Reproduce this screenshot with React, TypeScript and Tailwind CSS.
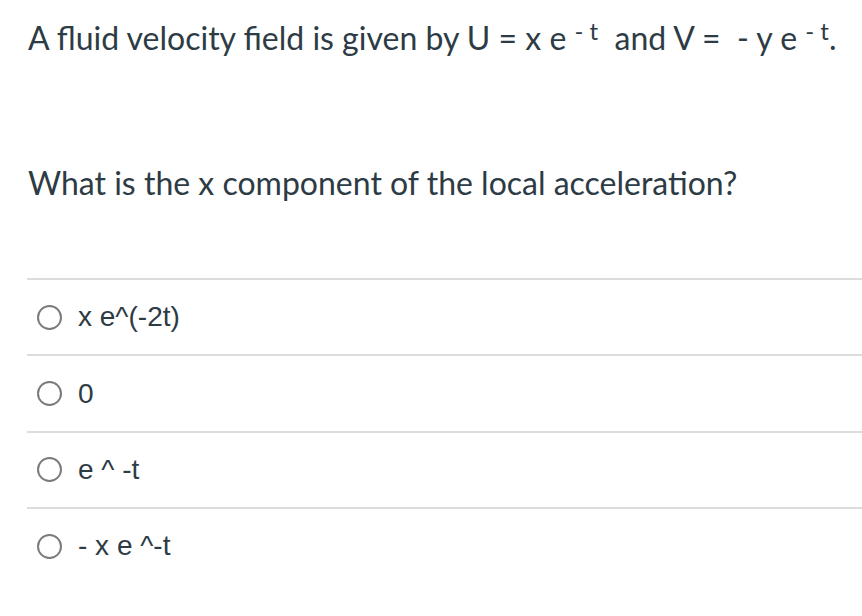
import React from 'react';

const answers = ['x e^(-2t)', '0', 'e ^ -t', '- x e ^-t'];

const Radio: React.FC = () => (
  <span className="inline-block w-[25px] h-[25px] rounded-full border-2 border-[#7b7b7b] bg-white shrink-0" />
);

const App: React.FC = () => {
  return (
    <div className="w-[862px] h-[616px] bg-white text-[#2d3b45] overflow-hidden" style={{ fontFamily: 'Lato, "Open Sans", sans-serif' }}>
      <div className="pl-[28px] pt-[18px]">
        <p className="text-[32px] leading-[40px] whitespace-nowrap">
          A fluid velocity field is given by U = x e <sup className="text-[24px] top-[-10px]">- t</sup>&nbsp; and V = &nbsp;- y e <sup className="text-[24px] top-[-10px]">- t</sup>.
        </p>
        <p className="text-[32px] leading-[40px] mt-[105px]">What is the x component of the local acceleration?</p>
      </div>
      <div className="pl-[27px] mt-[75px]">
        {answers.map((a, i) => (
          <div key={i} className="flex items-center gap-[16px] h-[76.4px] border-t-2 border-[#dcdcdc] pl-[10px]">
            <Radio />
            <span className="text-[28px]" style={{ fontFamily: '"Liberation Sans", Arial, sans-serif' }}>{a}</span>
          </div>
        ))}
      </div>
    </div>
  );
};

export default App;
